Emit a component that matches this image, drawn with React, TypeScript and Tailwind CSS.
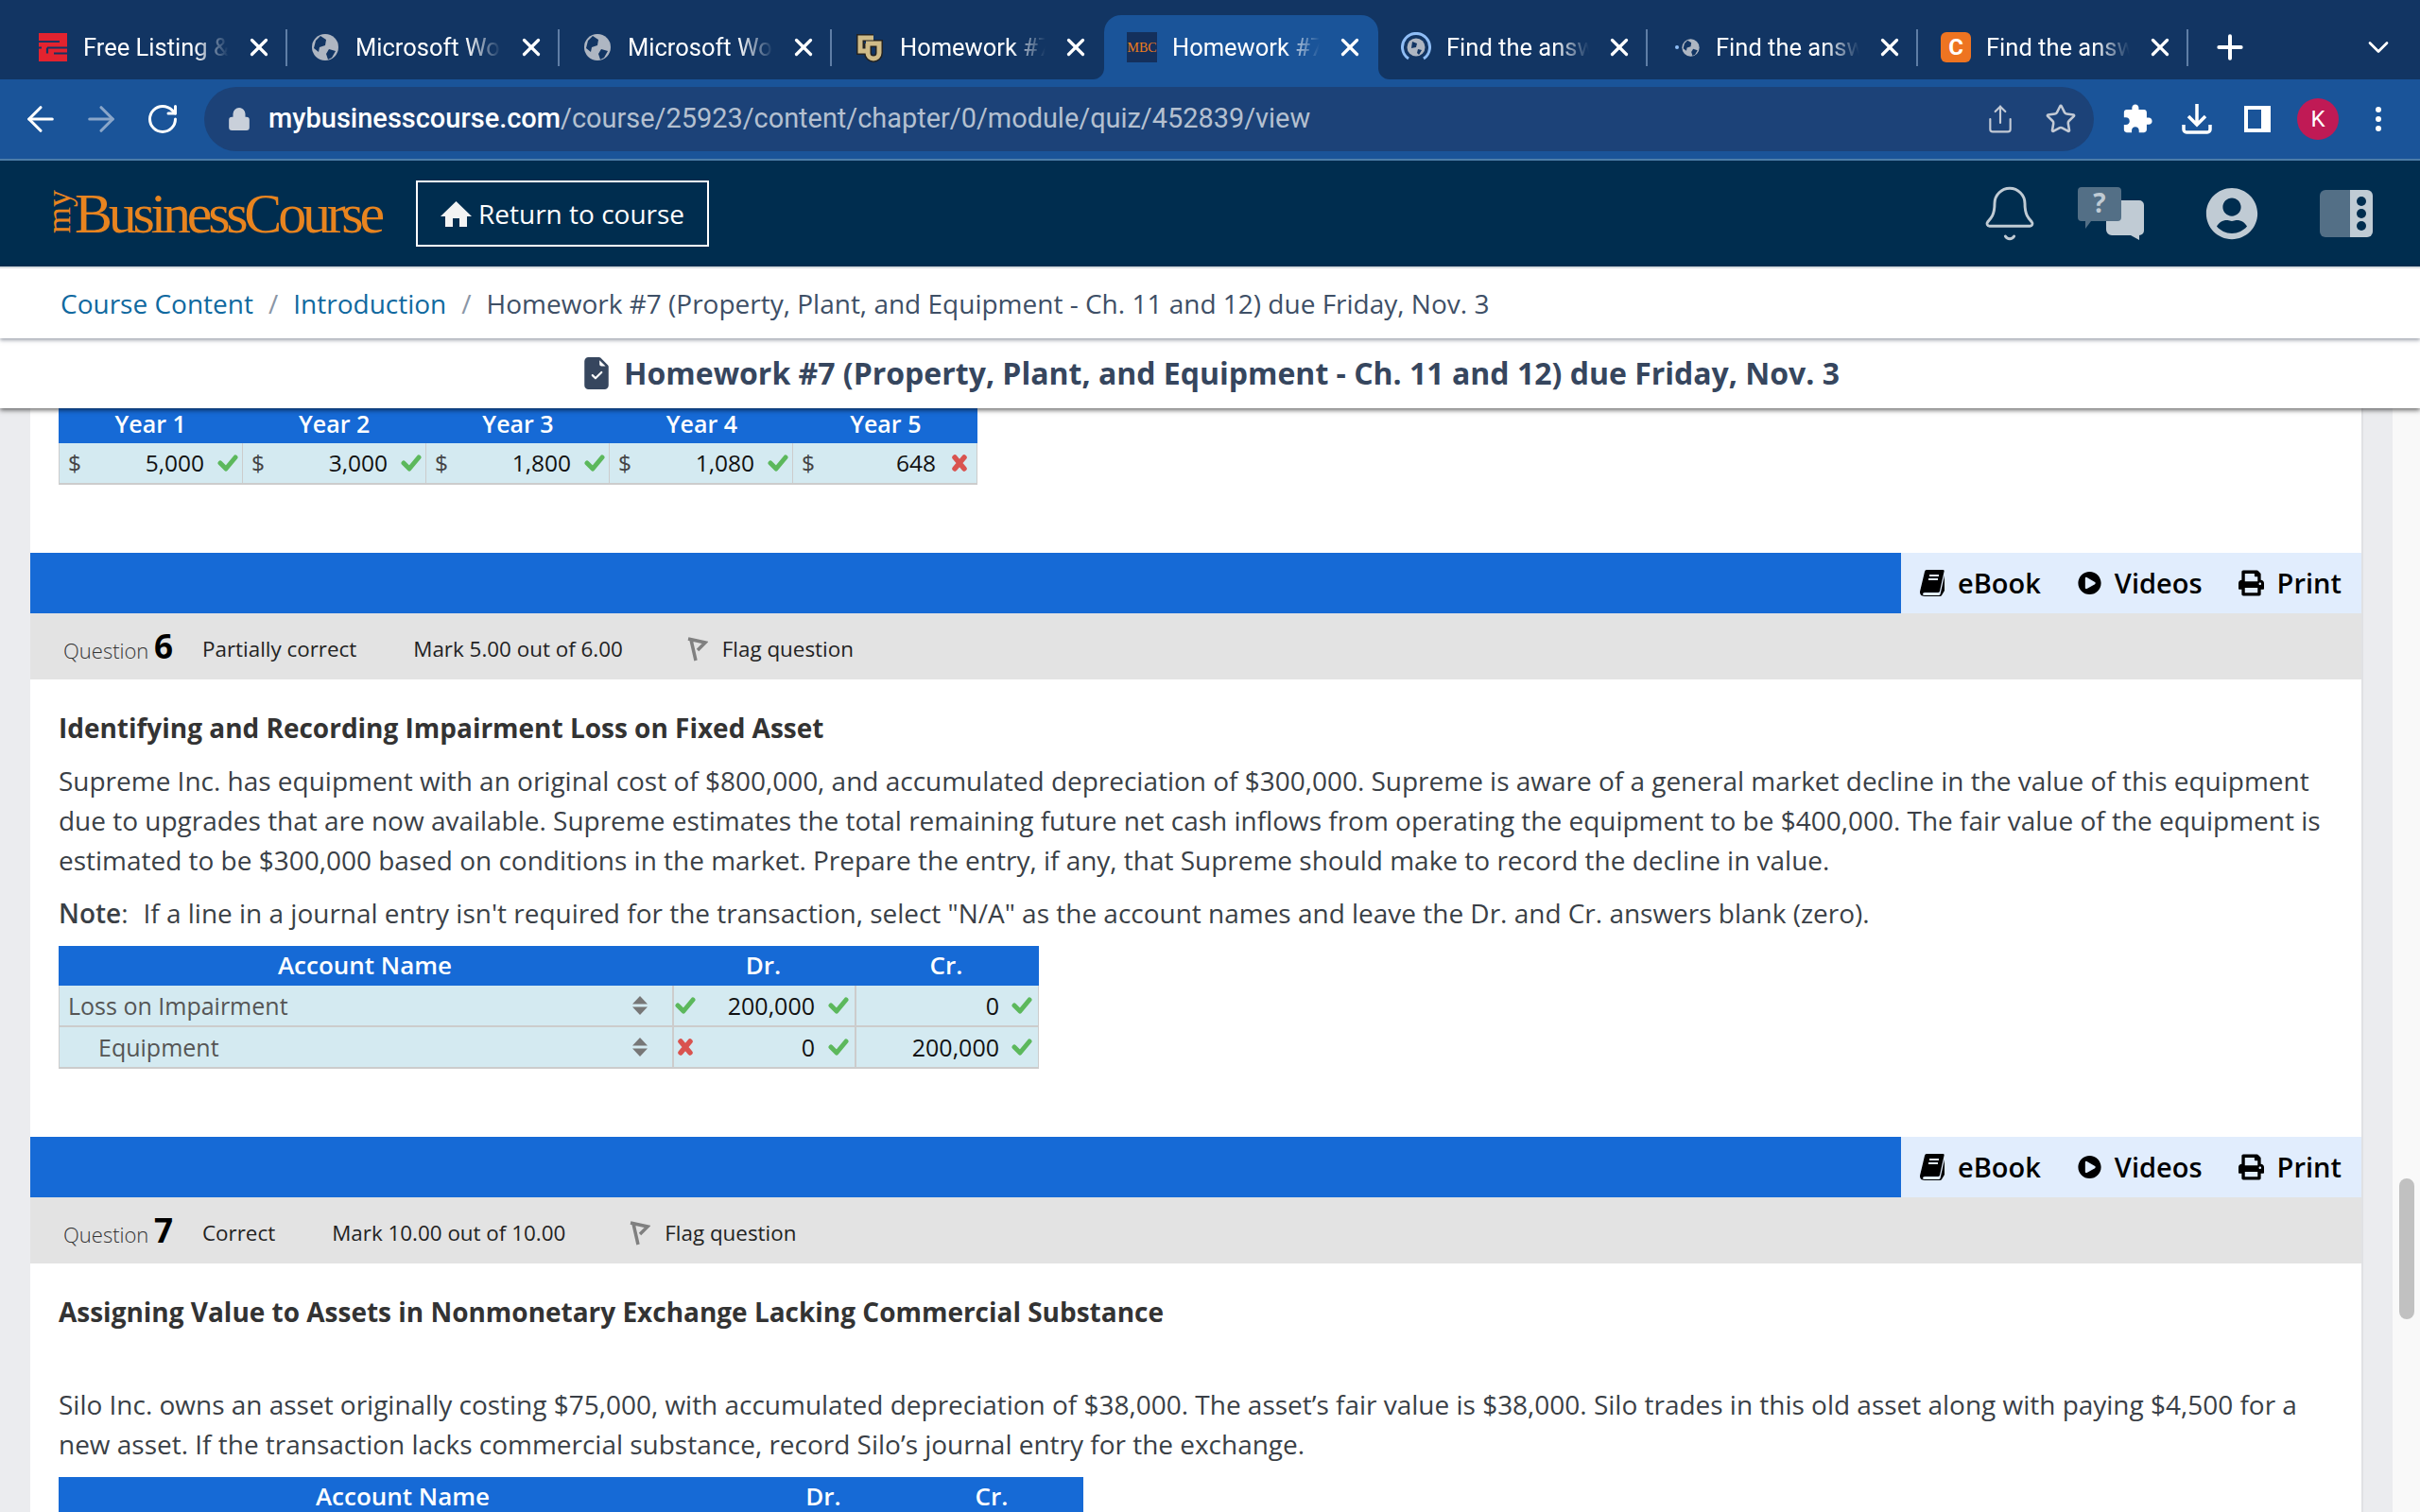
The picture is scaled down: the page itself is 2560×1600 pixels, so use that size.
import { Bell, Plus, X, ChevronDown, ArrowLeft, ArrowRight, RotateCw, Share, Star, Lock } from "lucide-react"
import { FaPlayCircle, FaPrint, FaUserCircle } from "react-icons/fa"
import { BsFileEarmarkCheckFill } from "react-icons/bs"

function Globe({ className = "w-8 h-8" }: { className?: string }) {
  return (
    <svg viewBox="0 0 32 32" className={className}>
      <circle cx="16" cy="16" r="14" fill="#aeb6c2" />
      <path d="M11 4l6 4-1 6-6 2-1 5-5-4 2-8zM20 18l7 2-4 7-4 2-2-6z" fill="#123563" />
    </svg>
  )
}

const tabs = [
  {
    title: "Free Listing & Business",
    width: "w-[288px]",
    icon: (
      <svg viewBox="0 0 30 30" className="w-[30px] h-[30px]">
        <rect width="30" height="30" fill="#e3232f" />
        <path d="M0 9h22M9 15.5h21M9 15.5v6M16 21.5h14M0 15.5h3" stroke="#123563" strokeWidth="2.2" fill="none" />
      </svg>
    ),
  },
  { title: "Microsoft Word - Document", width: "w-[288px]", icon: <Globe /> },
  { title: "Microsoft Word - Document", width: "w-[288px]", icon: <Globe /> },
  {
    title: "Homework #7 Homework",
    width: "w-[288px]",
    icon: (
      <svg viewBox="0 0 32 32" className="w-8 h-8" fill="none">
        <path d="M20 6H6v14h8M12 12h14v10a6 6 0 0 1-12 0v-10" stroke="#222" strokeWidth="8" />
        <path d="M20 6H6v14h8M12 12h14v10a6 6 0 0 1-12 0v-10" stroke="#cfbb88" strokeWidth="5" />
      </svg>
    ),
  },
  {
    title: "Homework #7 Homework",
    width: "w-[290px]",
    active: true,
    icon: (
      <div className="w-8 h-8 bg-[#14305c] flex items-center justify-center text-[14px] text-[#ef7d1a] font-['Liberation_Serif',serif]">
        MBC
      </div>
    ),
  },
  {
    title: "Find the answer to your",
    width: "w-[285px]",
    icon: (
      <svg viewBox="0 0 32 32" className="w-8 h-8">
        <path d="M8 28A14.5 14.5 0 1 1 24 28" fill="none" stroke="#8fbdf5" strokeWidth="3" />
        <circle cx="16" cy="16" r="9.5" fill="#aeb6c2" />
        <path d="M12 10l5 2-1 4-5 1zM18 18l4 1-3 5-2-2z" fill="#123563" />
      </svg>
    ),
  },
  {
    title: "Find the answer to your",
    width: "w-[286px]",
    icon: (
      <div className="w-8 h-8 flex items-center justify-end gap-[2px]">
        <div className="w-[4px] h-[4px] rounded-full bg-[#8fbdf5]" />
        <Globe className="w-[21px] h-[21px]" />
      </div>
    ),
  },
  {
    title: "Find the answer to your",
    width: "w-[286px]",
    icon: (
      <div className="w-8 h-8 rounded-md bg-[#ee7421] flex items-center justify-center text-white font-bold text-[24px] font-['Roboto',sans-serif]">
        C
      </div>
    ),
  },
]

function TabStrip() {
  return (
    <div className="h-[84px] bg-[#123563] flex items-end pl-[16px] font-['Roboto',sans-serif] text-[25.5px] text-white">
      {tabs.map((tab, i) => {
        const next = tabs[i + 1]
        return (
          <div
            key={i}
            className={`${tab.width} shrink-0 h-[68px] flex items-center pl-[24px] pr-[15px] relative ${
              tab.active ? "bg-[#1a5499] rounded-t-[18px]" : ""
            }`}
          >
            <div className="w-8 shrink-0 flex justify-center">{tab.icon}</div>
            <div className="ml-[16px] mr-[17px] flex-1 min-w-0 overflow-hidden whitespace-nowrap [mask-image:linear-gradient(to_right,#000_76%,transparent)]">
              {tab.title}
            </div>
            <X className="w-[30px] h-[30px] shrink-0" strokeWidth={2.6} />
            {tab.active && (
              <>
                <div className="absolute bottom-0 -left-[12px] w-[12px] h-[12px] bg-[#1a5499]">
                  <div className="w-full h-full bg-[#123563] rounded-br-[12px]" />
                </div>
                <div className="absolute bottom-0 -right-[12px] w-[12px] h-[12px] bg-[#1a5499]">
                  <div className="w-full h-full bg-[#123563] rounded-bl-[12px]" />
                </div>
              </>
            )}
            {!tab.active && !next?.active && (
              <div className="absolute right-0 top-[15px] h-[39px] w-[2px] bg-[#5f7ea6]" />
            )}
          </div>
        )
      })}
      <div className="h-[68px] flex items-center pl-[24px]">
        <Plus className="w-[40px] h-[40px]" strokeWidth={2.4} />
      </div>
      <div className="h-[68px] flex items-center ml-auto pr-[26px]">
        <ChevronDown className="w-[36px] h-[36px]" strokeWidth={1.8} />
      </div>
    </div>
  )
}

function Toolbar() {
  return (
    <div className="h-[86px] bg-[#1a5499] border-b-2 border-[#4c7ca8] flex items-start pt-[8px] text-white">
      <div className="w-[216px] h-[68px] flex items-center pl-[22px] gap-[22px] shrink-0">
        <ArrowLeft className="w-[42px] h-[42px]" strokeWidth={1.8} />
        <ArrowRight className="w-[42px] h-[42px] text-[#8aa6c9]" strokeWidth={1.8} />
        <RotateCw className="ml-[4px] w-[36px] h-[36px]" strokeWidth={2} />
      </div>
      <div className="w-[1999px] h-[68px] rounded-full bg-[#1c4278] flex items-center pl-[24px] pr-[18px] font-['Roboto',sans-serif] text-[29px] shrink-0">
        <Lock className="w-[26px] h-[26px] text-[#c9d0da] fill-[#c9d0da]" strokeWidth={2} />
        <span className="ml-[18px] text-white font-medium">mybusinesscourse.com</span>
        <span className="text-[#b4c0d0] text-[28.9px]">/course/25923/content/chapter/0/module/quiz/452839/view</span>
        <Share className="ml-auto w-[32px] h-[32px] text-[#c3cad5]" strokeWidth={1.6} />
        <Star className="ml-[31px] w-[34px] h-[34px] text-[#c3cad5]" strokeWidth={1.8} />
      </div>
      <div className="flex-1 h-[68px] flex items-center pl-[29px]">
        <svg viewBox="0 0 24 24" className="w-[34px] h-[34px]" fill="#fff">
          <path d="M20.5 11H19V7c0-1.1-.9-2-2-2h-4V3.5C13 2.12 11.88 1 10.5 1S8 2.12 8 3.5V5H4c-1.1 0-1.99.9-1.99 2v3.8H3.5c1.49 0 2.7 1.21 2.7 2.7s-1.21 2.7-2.7 2.7H2V20c0 1.1.9 2 2 2h3.8v-1.5c0-1.49 1.21-2.7 2.7-2.7 1.49 0 2.7 1.21 2.7 2.7V22H17c1.1 0 2-.9 2-2v-4h1.5c1.38 0 2.5-1.12 2.5-2.5S21.88 11 20.5 11z" />
        </svg>
        <svg viewBox="0 0 32 32" className="ml-[30px] w-[32px] h-[32px]" fill="none" stroke="#fff" strokeWidth="3.5">
          <path d="M16 0v22M7 13l9 9 9-9M2 22v5a3 3 0 0 0 3 3h22a3 3 0 0 0 3-3v-5" />
        </svg>
        <div className="ml-[34px] w-[28px] h-[28px] bg-white pl-[4px] pt-[4px]">
          <div className="w-[14px] h-[20px] bg-[#1a5499]" />
        </div>
        <div className="ml-[28px] w-[44px] h-[44px] rounded-full bg-[#c01a55] flex items-center justify-center text-[24px] font-['Roboto',sans-serif]">
          K
        </div>
        <div className="ml-[39px] flex flex-col gap-[4px]">
          <div className="w-[6px] h-[6px] rounded-full bg-white" />
          <div className="w-[6px] h-[6px] rounded-full bg-white" />
          <div className="w-[6px] h-[6px] rounded-full bg-white" />
        </div>
      </div>
    </div>
  )
}

function Header() {
  return (
    <div className="h-[112px] bg-[#002d4f] flex items-center pl-[50px] pr-[50px] text-[#c0cbd4]">
      <div className="flex items-center text-[#e8841f] font-['Liberation_Serif',serif] w-[390px] shrink-0">
        <div className="w-[24px] h-[46px] mr-[5px] -mt-[4px] flex items-center justify-center">
          <span className="text-[36px] leading-none -rotate-90 whitespace-nowrap">my</span>
        </div>
        <span className="text-[60px] leading-none tracking-[-4.25px]">BusinessCourse</span>
      </div>
      <div className="h-[70px] w-[310px] border-2 border-white flex items-center pl-[24px] gap-[7px] text-white font-['Open_Sans',sans-serif] text-[28px]">
        <svg viewBox="0 0 33 27" className="w-[33px] h-[27px]" fill="#f3f3f3">
          <path d="M16.5 0L33 16H28V27H20V18H13V27H5V16H0Z" />
        </svg>
        Return to course
      </div>
      <div className="ml-auto flex items-center">
        <Bell className="w-[64px] h-[64px]" strokeWidth={1.1} />
        <svg viewBox="0 0 70 56" className="ml-[40px] w-[70px] h-[56px]">
          <path d="M30 14h35a5 5 0 0 1 5 5v27a5 5 0 0 1-5 5v5l-9-5H36a6 6 0 0 1-6-6z" fill="#c0cbd4" />
          <path d="M4 0h38a4 4 0 0 1 4 4v28a4 4 0 0 1-4 4H14l-6 8v-8H4a4 4 0 0 1-4-4V4a4 4 0 0 1 4-4z" fill="#536f86" />
          <text x="23" y="27" textAnchor="middle" fontSize="28" fontWeight="700" fill="#c0cbd4" fontFamily="Open Sans">?</text>
        </svg>
        <FaUserCircle className="ml-[65px] w-[56px] h-[56px]" />
        <div className="ml-[65px] w-[56px] h-[50px] rounded-md overflow-hidden flex">
          <div className="w-[32px] bg-[#536f86]" />
          <div className="flex-1 bg-[#c0cbd4] flex flex-col items-center justify-center gap-[3px]">
            <div className="w-[10px] h-[10px] rounded-full bg-[#002d4f]" />
            <div className="w-[10px] h-[10px] rounded-full bg-[#002d4f]" />
            <div className="w-[10px] h-[10px] rounded-full bg-[#002d4f]" />
          </div>
        </div>
      </div>
    </div>
  )
}

function Breadcrumb() {
  return (
    <div className="h-[76px] bg-white border-t-2 border-[#d9dde1] flex items-center pl-[64px] text-[28px] text-[#3e4f66] shadow-[0_2px_4px_rgba(60,70,90,0.5)] relative z-20">
      <span className="text-[#10699f]">Course Content</span>
      <span className="mx-[16px] text-[#8a96a6]">/</span>
      <span className="text-[#10699f]">Introduction</span>
      <span className="mx-[16px] text-[#8a96a6]">/</span>
      <span>Homework #7 (Property, Plant, and Equipment - Ch. 11 and 12) due Friday, Nov. 3</span>
    </div>
  )
}

function TitleBar() {
  return (
    <div className="h-[74px] bg-white flex items-center justify-center gap-[12px] text-[32px] font-bold text-[#36465e] shadow-[0_2px_5px_rgba(0,0,0,0.6)] relative z-10">
      <BsFileEarmarkCheckFill className="w-[34px] h-[34px]" />
      Homework #7 (Property, Plant, and Equipment - Ch. 11 and 12) due Friday, Nov. 3
    </div>
  )
}

function Mark({ ok }: { ok: boolean }) {
  return ok ? (
    <svg viewBox="0 0 22 18" className="w-[22px] h-[18px] shrink-0" fill="none" stroke="#5cb85c" strokeWidth="5" strokeLinecap="round" strokeLinejoin="round">
      <path d="M3 9l6 6L19 3" />
    </svg>
  ) : (
    <svg viewBox="0 0 22 18" className="w-[22px] h-[18px] shrink-0" fill="none" stroke="#d9534f" strokeWidth="5.5" strokeLinecap="round">
      <path d="M6 3l10 12M16 3L6 15" />
    </svg>
  )
}

const years = [
  { label: "Year 1", value: "5,000", ok: true },
  { label: "Year 2", value: "3,000", ok: true },
  { label: "Year 3", value: "1,800", ok: true },
  { label: "Year 4", value: "1,080", ok: true },
  { label: "Year 5", value: "648", ok: false },
]

function YearTable() {
  return (
    <div className="w-[972px] text-[24.5px]">
      <div className="grid grid-cols-5 h-[37px] bg-[#166ad6] text-white font-semibold text-[25px] text-center leading-[33px]">
        {years.map((y) => (
          <div key={y.label}>{y.label}</div>
        ))}
      </div>
      <div className="grid grid-cols-5 h-[44px] bg-[#d4eaf1] border-b-2 border-x border-[#cccccc] text-[#111]">
        {years.map((y) => (
          <div key={y.label} className="flex items-center pl-[9px] pr-[4px] last:pr-[7px] border-r border-[#cccccc] last:border-r-0">
            <span className="text-[#444]">$</span>
            <span className="ml-auto mr-[14px]">{y.value}</span>
            <Mark ok={y.ok} />
          </div>
        ))}
      </div>
    </div>
  )
}

function Actions() {
  return (
    <div className="h-[64px] bg-[#166ad6] flex justify-end">
      <div className="w-[487px] bg-[#e1edfd] flex items-center pl-[20px] text-[29px] font-semibold text-black">
        <svg viewBox="0 0 26 28" className="w-[26px] h-[28px]">
          <path d="M7 0h17.5q1.5 0 1 2L21 22.5q-.4 1.5-2 1.5H5q-2 0-2 1.5T5 27h15q1 0 1.5-1L26 6v16l-3 5q-.5 1-2 1H5q-5 0-5-4.5 0-1 .5-2.5L5 2q.4-2 2-2z" fill="#000" />
          <path d="M10 6h10M9 10h10" stroke="#e1edfd" strokeWidth="2" />
        </svg>
        <span className="ml-[14px]">eBook</span>
        <FaPlayCircle className="ml-[39px] w-[25px] h-[28px]" />
        <span className="ml-[14px]">Videos</span>
        <FaPrint className="ml-[38px] w-[27px] h-[28px]" />
        <span className="ml-[14px]">Print</span>
      </div>
    </div>
  )
}

function FlagIcon() {
  return (
    <svg viewBox="0 0 24 28" className="w-[24px] h-[28px]" fill="none" stroke="#808080" strokeWidth="3.5">
      <path d="M3 3l18 4-8 8M6 4l5 22" />
    </svg>
  )
}

function QuestionBar({ n, state, mark }: { n: number; state: string; mark: string }) {
  return (
    <div className="h-[70px] bg-[#e3e3e3] flex items-center pl-[35px] pt-[6px] text-[22.4px] text-[#222]">
      <span className="font-light text-[22px] text-[#333] w-[147px] shrink-0 whitespace-nowrap -mt-[4px]">
        Question <span className="font-bold text-[35px] text-black leading-none">{n}</span>
      </span>
      <span>{state}</span>
      <span className="ml-[60px]">{mark}</span>
      <span className="ml-[66px]">
        <FlagIcon />
      </span>
      <span className="ml-[15px]">Flag question</span>
    </div>
  )
}

function SortIcon() {
  return (
    <svg viewBox="0 0 16 20" className="ml-auto w-[16px] h-[20px]" fill="#777">
      <path d="M8 0l8 8.5H0zM8 20l8-8.5H0z" />
    </svg>
  )
}

function JournalTable({
  widths,
  rows,
}: {
  widths: string
  rows?: { name: string; indent?: boolean; dr: string; cr: string; pick: boolean }[]
}) {
  return (
    <div className="text-[25px]">
      <div className={`grid ${widths} h-[42px] bg-[#166ad6] text-white font-semibold text-[26px] text-center leading-[40px]`}>
        <div>Account Name</div>
        <div>Dr.</div>
        <div>Cr.</div>
      </div>
      {rows?.map((row) => (
        <div key={row.name} className={`grid ${widths} h-[44px] bg-[#d4eaf1] border-b-2 border-x border-[#cccccc]`}>
          <div className={`flex items-center pr-[26px] text-[#555] ${row.indent ? "pl-[41px]" : "pl-[9px]"}`}>
            {row.name}
            <SortIcon />
          </div>
          <div className="flex items-center pl-[1px] pr-[6px] border-x-2 border-[#cccccc] text-[#111]">
            <Mark ok={row.pick} />
            <span className="ml-auto mr-[14px]">{row.dr}</span>
            <Mark ok />
          </div>
          <div className="flex items-center justify-end pr-[6px] text-[#111]">
            <span className="mr-[13px]">{row.cr}</span>
            <Mark ok />
          </div>
        </div>
      ))}
    </div>
  )
}

export default function App() {
  return (
    <div className="w-[2560px] h-[1600px] overflow-hidden flex flex-col bg-white font-['Open_Sans',sans-serif]">
      <TabStrip />
      <Toolbar />
      <Header />
      <Breadcrumb />
      <TitleBar />
      <div className="flex-1 min-h-0 flex">
        <div className="w-[32px] shrink-0 bg-[#ebecef]" />
        <main className="w-[2466px] shrink-0 overflow-hidden">
          <div className="pl-[30px]">
            <YearTable />
          </div>
          <div className="mt-[72px]">
            <Actions />
            <QuestionBar n={6} state="Partially correct" mark="Mark 5.00 out of 6.00" />
          </div>
          <div className="px-[30px] text-[27.98px] leading-[42px] text-[#3a3f46]">
            <h3 className="mt-[30px] font-bold text-[#333]">Identifying and Recording Impairment Loss on Fixed Asset</h3>
            <p className="mt-[14px]">
              Supreme Inc. has equipment with an original cost of $800,000, and accumulated depreciation of $300,000. Supreme is aware of a general market decline in the value of this equipment due to upgrades that are now available. Supreme estimates the total remaining future net cash inflows from operating the equipment to be $400,000. The fair value of the equipment is estimated to be $300,000 based on conditions in the market. Prepare the entry, if any, that Supreme should make to record the decline in value.
            </p>
            <p className="mt-[14px]">
              <b className="font-semibold">Note</b>:<span className="ml-[16px]">If a line in a journal entry isn't required for the transaction, select "N/A" as the account names and leave the Dr. and Cr. answers blank (zero).</span>
            </p>
            <div className="mt-[14px] w-[1037px]">
              <JournalTable
                widths="grid-cols-[648px_195px_192px]"
                rows={[
                  { name: "Loss on Impairment", dr: "200,000", cr: "0", pick: true },
                  { name: "Equipment", indent: true, dr: "0", cr: "200,000", pick: false },
                ]}
              />
            </div>
          </div>
          <div className="mt-[72px]">
            <Actions />
            <QuestionBar n={7} state="Correct" mark="Mark 10.00 out of 10.00" />
          </div>
          <div className="px-[30px] text-[27.98px] leading-[42px] text-[#3a3f46]">
            <h3 className="mt-[30px] font-bold text-[#333]">Assigning Value to Assets in Nonmonetary Exchange Lacking Commercial Substance</h3>
            <p className="mt-[56px]">
              Silo Inc. owns an asset originally costing $75,000, with accumulated depreciation of $38,000. The asset’s fair value is $38,000. Silo trades in this old asset along with paying $4,500 for a new asset. If the transaction lacks commercial substance, record Silo’s journal entry for the exchange.
            </p>
            <div className="mt-[14px] w-[1084px]">
              <JournalTable widths="grid-cols-[728px_162px_194px]" />
            </div>
          </div>
        </main>
        <div className="w-[33px] shrink-0 bg-[#ebecef] border-l-2 border-[#e0e1e4]" />
        <div className="flex-1 bg-[#f9f9f9] pt-[815px] pl-[7px]">
          <div className="w-[16px] h-[149px] rounded-full bg-[#c1c1c1]" />
        </div>
      </div>
    </div>
  )
}
